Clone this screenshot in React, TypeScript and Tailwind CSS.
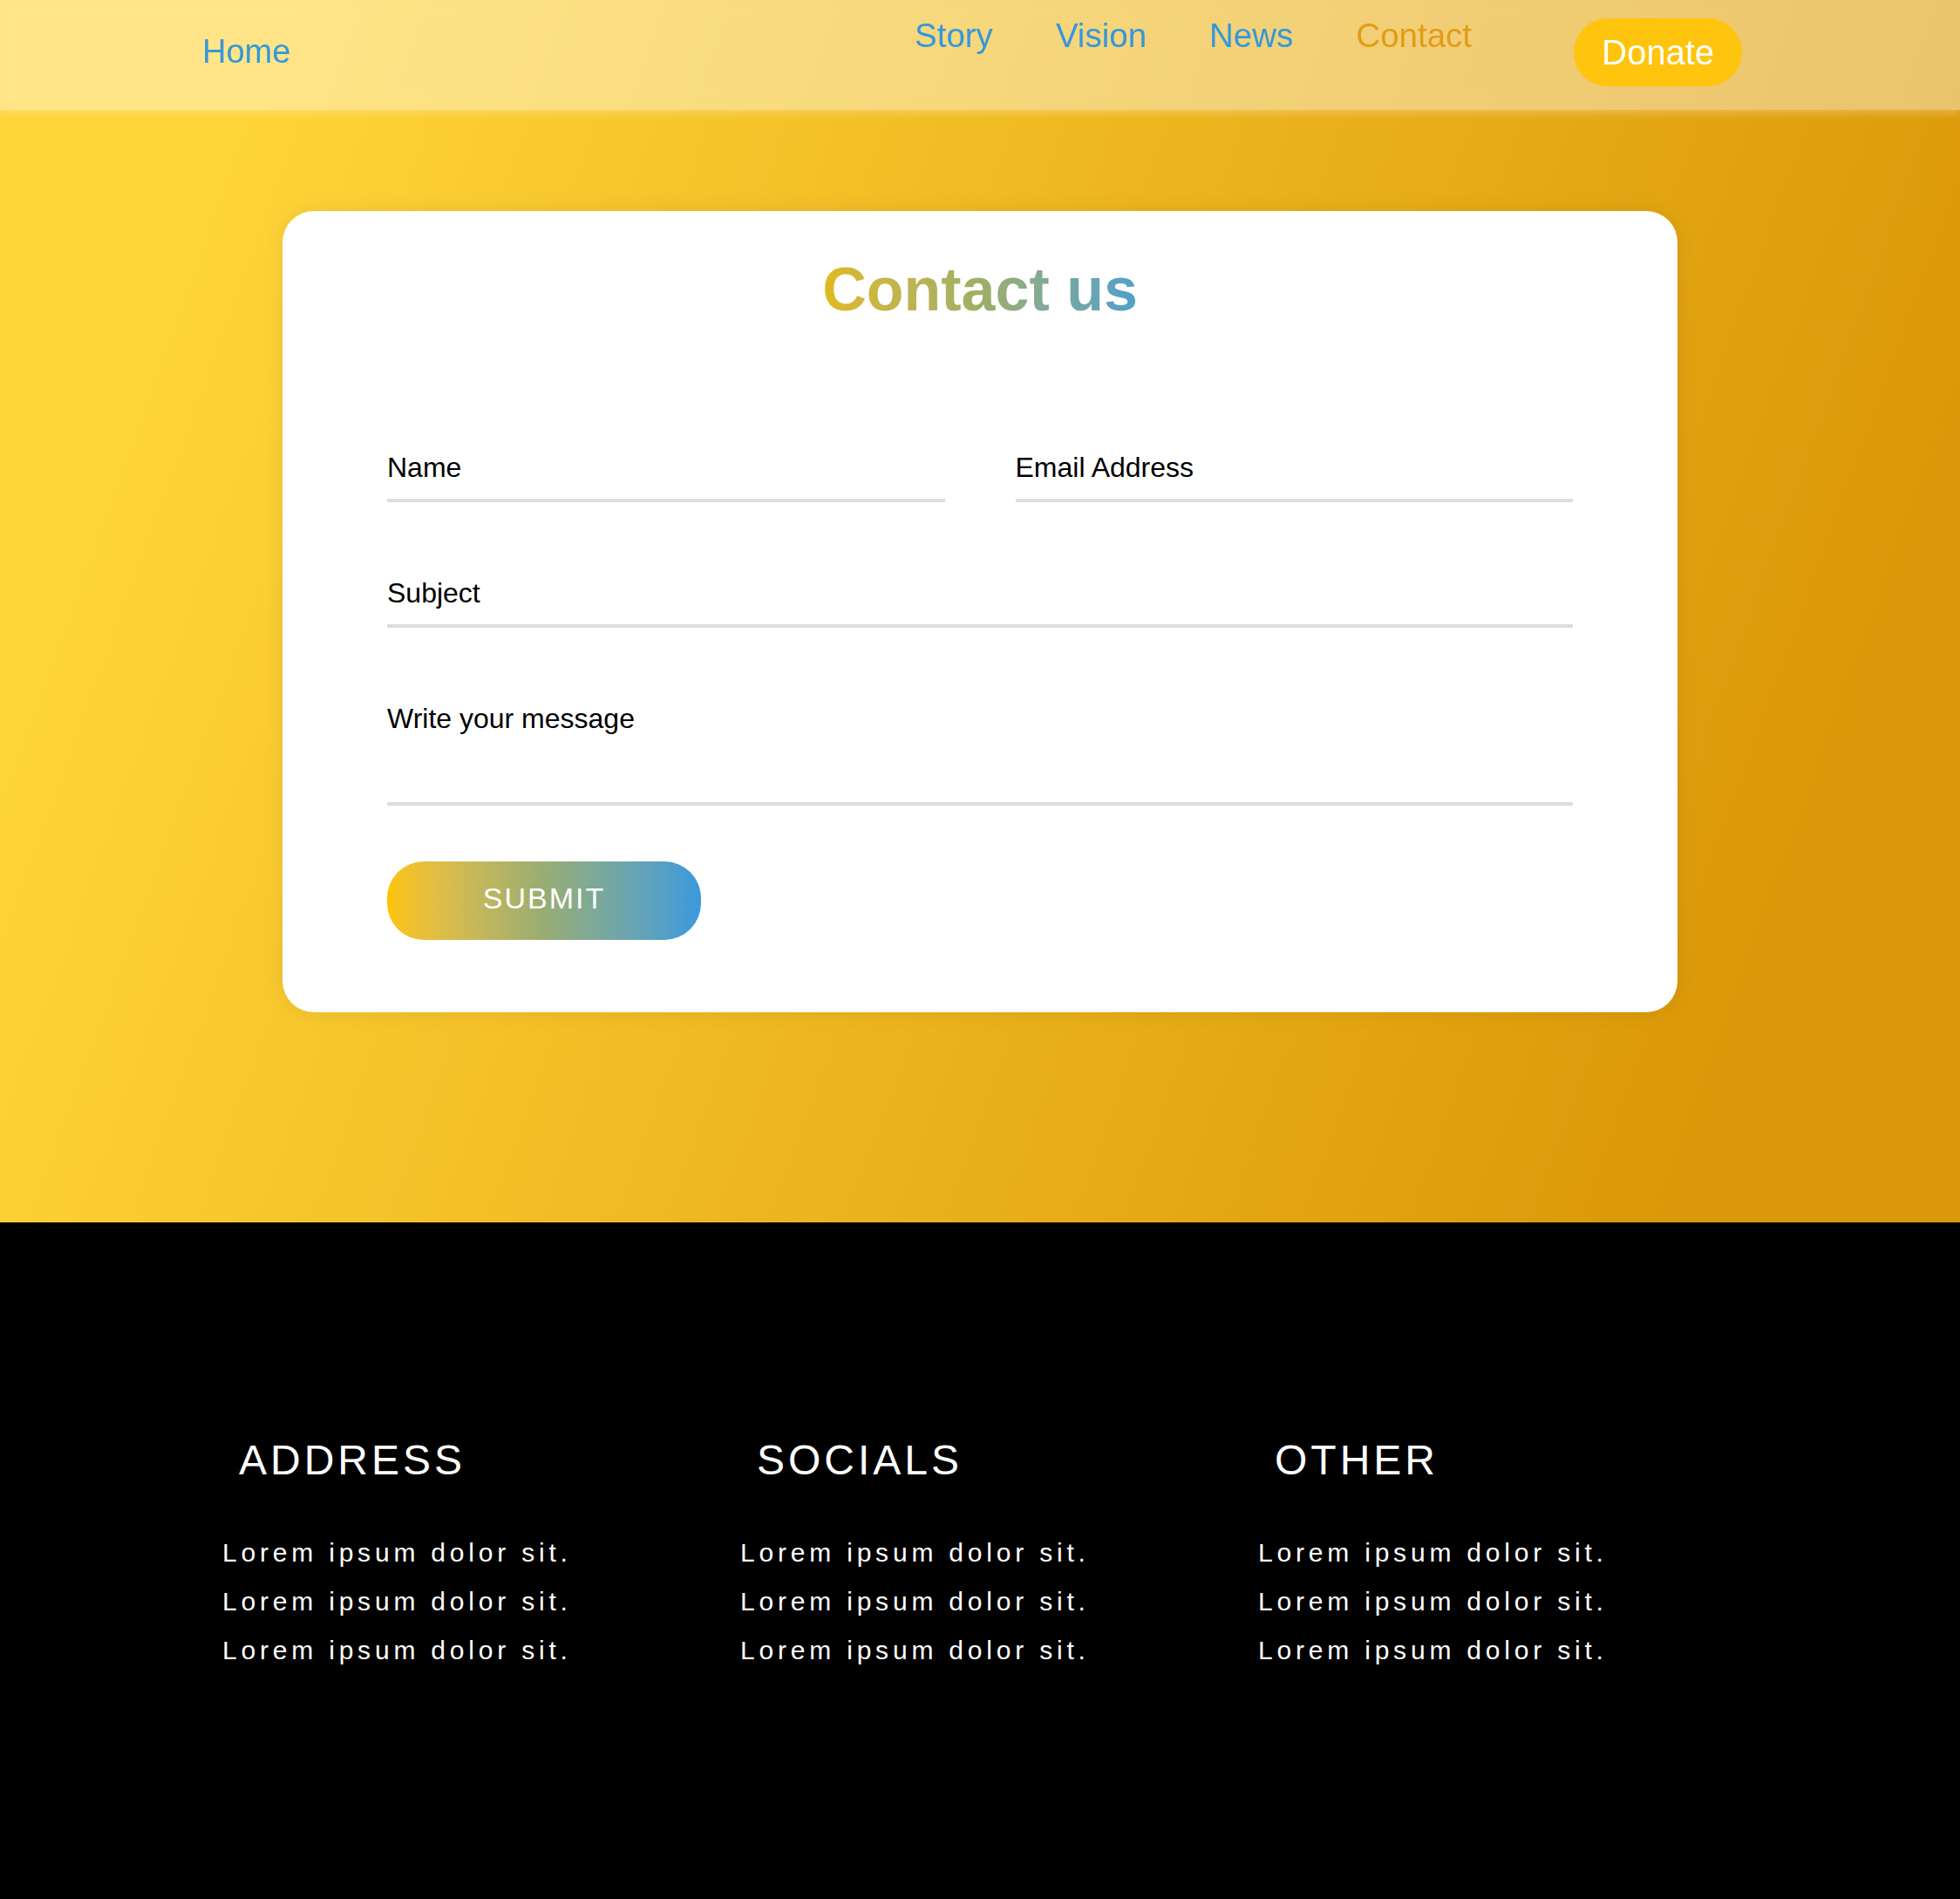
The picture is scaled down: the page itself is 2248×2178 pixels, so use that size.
import React from "react";

const NAV_LINKS = ["Story", "Vision", "News", "Contact"];

const FOOTER_COLUMNS = [
  { title: "ADDRESS", lines: ["Lorem ipsum dolor sit.", "Lorem ipsum dolor sit.", "Lorem ipsum dolor sit."] },
  { title: "SOCIALS", lines: ["Lorem ipsum dolor sit.", "Lorem ipsum dolor sit.", "Lorem ipsum dolor sit."] },
  { title: "OTHER", lines: ["Lorem ipsum dolor sit.", "Lorem ipsum dolor sit.", "Lorem ipsum dolor sit."] },
];

function Navbar() {
  return (
    <nav className="flex h-[126px] items-start bg-white/40 pl-[232px] pr-[250px] shadow-[0_4px_8px_rgba(255,255,255,0.25)] backdrop-blur-sm">
      <a href="#" className="mt-[37px] text-[38px] leading-[44px] text-[#3498db]">
        Home
      </a>
      <div className="ml-auto flex items-start">
        <ul className="mt-[19px] flex items-center gap-[72px]">
          {NAV_LINKS.map((link) => (
            <li key={link}>
              <a
                href="#"
                className={`text-[38.5px] leading-[44px] ${
                  link === "Contact" ? "text-[#e19c18]" : "text-[#3498db]"
                }`}
              >
                {link}
              </a>
            </li>
          ))}
        </ul>
        <button className="ml-[117px] mt-[21px] rounded-full bg-[#ffc50e] px-[32px] py-[16px] text-[40px] leading-[46px] text-white">
          Donate
        </button>
      </div>
    </nav>
  );
}

function ContactCard() {
  const fieldClass =
    "h-[75px] w-full border-b-4 border-[#dddddd] bg-transparent text-[32px] text-black outline-none placeholder:text-black";

  return (
    <div className="mx-auto mt-[116px] w-[1600px] rounded-[36px] bg-white px-[120px] pt-[50px] pb-[83px] shadow-[0_0_24px_rgba(0,0,0,0.08)]">
      <h1 className="text-center text-[70px] font-bold leading-[80px]">
        <span className="inline-block bg-gradient-to-r from-[#e0b91c] via-[#9fae68] to-[#4f9fcc] bg-clip-text text-transparent">
          Contact us
        </span>
      </h1>

      <form className="mt-[129px] flex flex-col" onSubmit={(e) => e.preventDefault()}>
        <div className="grid grid-cols-2 gap-x-[81px]">
          <input type="text" placeholder="Name" className={fieldClass} />
          <input type="email" placeholder="Email Address" className={fieldClass} />
        </div>
        <input type="text" placeholder="Subject" className={`mt-[69px] ${fieldClass}`} />
        <textarea
          placeholder="Write your message"
          className="mt-[69px] h-[135px] w-full resize-none border-b-4 border-[#dddddd] bg-transparent pt-[17px] text-[32px] leading-[37px] text-black outline-none placeholder:text-black"
        />
        <button
          type="submit"
          className="mt-[64px] h-[90px] w-[360px] rounded-[42px] bg-gradient-to-r from-[#ffc400] via-[#98ad72] to-[#3a99dc] pb-[5px] text-[34px] tracking-[2px] text-white"
        >
          SUBMIT
        </button>
      </form>
    </div>
  );
}

function Footer() {
  return (
    <footer className="h-[776px] bg-black pl-[255px] pt-[245px] text-white">
      <div className="grid grid-cols-[594px_594px_594px]">
        {FOOTER_COLUMNS.map((col) => (
          <div key={col.title}>
            <h2 className="pl-[19px] text-[48px] leading-[56px] tracking-[4px]">{col.title}</h2>
            <ul className="mt-[50px]">
              {col.lines.map((line, i) => (
                <li key={i} className="text-[30px] leading-[56px] tracking-[4.8px]">
                  {line}
                </li>
              ))}
            </ul>
          </div>
        ))}
      </div>
    </footer>
  );
}

export default function App() {
  return (
    <div className="min-h-screen bg-black font-['Liberation_Sans',Arial,sans-serif]">
      <section className="h-[1402px] bg-[linear-gradient(110deg,#ffd438_12%,#db9808_88%)]">
        <Navbar />
        <ContactCard />
      </section>
      <Footer />
    </div>
  );
}
